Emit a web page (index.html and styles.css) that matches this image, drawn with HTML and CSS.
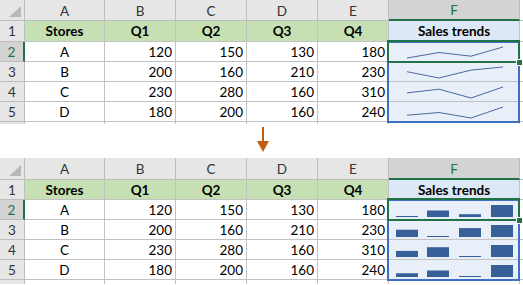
FILE: index.html
```html
<!DOCTYPE html>
<html>
<head>
<meta charset="utf-8">
<link rel="stylesheet" href="styles.css">
</head>
<body>
<div class="sheet sheet1">
  <div class="cell corner"><svg width="24" height="20" viewBox="0 0 24 20"><polygon points="21,6 21,17 9,17" fill="#b9b9b9"/></svg></div>
  <div class="cell colhead">A</div>
  <div class="cell colhead">B</div>
  <div class="cell colhead">C</div>
  <div class="cell colhead">D</div>
  <div class="cell colhead">E</div>
  <div class="cell colhead sel">F</div>
  <div class="cell colhead rest"></div>

  <div class="cell rowhead">1</div>
  <div class="cell h">Stores</div>
  <div class="cell h">Q1</div>
  <div class="cell h">Q2</div>
  <div class="cell h">Q3</div>
  <div class="cell h">Q4</div>
  <div class="cell h hf">Sales trends</div>
  <div class="cell rest"></div>

  <div class="cell rowhead selrow">2</div>
  <div class="cell c">A</div>
  <div class="cell n">120</div><div class="cell n">150</div><div class="cell n">130</div><div class="cell n">180</div>
  <div class="cell spark"><svg width="130" height="19" viewBox="0 0 130 19"><polyline points="18,16 50,10.5 82,14.2 114,5" /></svg></div>
  <div class="cell rest"></div>

  <div class="cell rowhead">3</div>
  <div class="cell c">B</div>
  <div class="cell n">200</div><div class="cell n">160</div><div class="cell n">210</div><div class="cell n">230</div>
  <div class="cell spark"><svg width="130" height="19" viewBox="0 0 130 19"><polyline points="18,9.7 50,16 82,8.1 114,5" /></svg></div>
  <div class="cell rest"></div>

  <div class="cell rowhead">4</div>
  <div class="cell c">C</div>
  <div class="cell n">230</div><div class="cell n">280</div><div class="cell n">160</div><div class="cell n">310</div>
  <div class="cell spark"><svg width="130" height="19" viewBox="0 0 130 19"><polyline points="18,10.9 50,7.2 82,16 114,5" /></svg></div>
  <div class="cell rest"></div>

  <div class="cell rowhead">5</div>
  <div class="cell c">D</div>
  <div class="cell n">180</div><div class="cell n">200</div><div class="cell n">160</div><div class="cell n">240</div>
  <div class="cell spark"><svg width="130" height="19" viewBox="0 0 130 19"><polyline points="18,13.25 50,10.5 82,16 114,5" /></svg></div>
  <div class="cell rest"></div>

  <div class="cell rowhead stub"></div>
  <div class="cell stub"></div><div class="cell stub"></div><div class="cell stub"></div><div class="cell stub"></div><div class="cell stub"></div><div class="cell stub"></div><div class="cell rest stub"></div>

  <div class="range"></div>
  <div class="active"><span class="handle"></span></div>
</div>

<div class="arrow">
  <svg width="12" height="26" viewBox="0 0 12 26"><rect x="5" y="0" width="2" height="16" fill="#c55a11"/><polygon points="0,14 12,14 6,25" fill="#c55a11"/></svg>
</div>

<div class="sheet sheet2">
  <div class="cell corner"><svg width="24" height="20" viewBox="0 0 24 20"><polygon points="21,6 21,17 9,17" fill="#b9b9b9"/></svg></div>
  <div class="cell colhead">A</div>
  <div class="cell colhead">B</div>
  <div class="cell colhead">C</div>
  <div class="cell colhead">D</div>
  <div class="cell colhead">E</div>
  <div class="cell colhead sel">F</div>
  <div class="cell colhead rest"></div>

  <div class="cell rowhead">1</div>
  <div class="cell h">Stores</div>
  <div class="cell h">Q1</div>
  <div class="cell h">Q2</div>
  <div class="cell h">Q3</div>
  <div class="cell h">Q4</div>
  <div class="cell h hf">Sales trends</div>
  <div class="cell rest"></div>

  <div class="cell rowhead selrow">2</div>
  <div class="cell c">A</div>
  <div class="cell n">120</div><div class="cell n">150</div><div class="cell n">130</div><div class="cell n">180</div>
  <div class="cell spark"><svg width="130" height="19" viewBox="0 0 130 19"><rect x="7" y="16" width="22" height="1"/><rect x="38" y="10.5" width="22" height="6.5"/><rect x="70" y="14.2" width="22" height="2.8"/><rect x="102" y="5" width="22" height="12"/></svg></div>
  <div class="cell rest"></div>

  <div class="cell rowhead">3</div>
  <div class="cell c">B</div>
  <div class="cell n">200</div><div class="cell n">160</div><div class="cell n">210</div><div class="cell n">230</div>
  <div class="cell spark"><svg width="130" height="19" viewBox="0 0 130 19"><rect x="7" y="9.7" width="22" height="7.3"/><rect x="38" y="16" width="22" height="1"/><rect x="70" y="8.1" width="22" height="8.9"/><rect x="102" y="5" width="22" height="12"/></svg></div>
  <div class="cell rest"></div>

  <div class="cell rowhead">4</div>
  <div class="cell c">C</div>
  <div class="cell n">230</div><div class="cell n">280</div><div class="cell n">160</div><div class="cell n">310</div>
  <div class="cell spark"><svg width="130" height="19" viewBox="0 0 130 19"><rect x="7" y="10.9" width="22" height="6.1"/><rect x="38" y="7.2" width="22" height="9.8"/><rect x="70" y="16" width="22" height="1"/><rect x="102" y="5" width="22" height="12"/></svg></div>
  <div class="cell rest"></div>

  <div class="cell rowhead">5</div>
  <div class="cell c">D</div>
  <div class="cell n">180</div><div class="cell n">200</div><div class="cell n">160</div><div class="cell n">240</div>
  <div class="cell spark"><svg width="130" height="19" viewBox="0 0 130 19"><rect x="7" y="13.25" width="22" height="3.75"/><rect x="38" y="10.5" width="22" height="6.5"/><rect x="70" y="16" width="22" height="1"/><rect x="102" y="5" width="22" height="12"/></svg></div>
  <div class="cell rest"></div>

  <div class="cell rowhead stub"></div>
  <div class="cell stub"></div><div class="cell stub"></div><div class="cell stub"></div><div class="cell stub"></div><div class="cell stub"></div><div class="cell stub"></div><div class="cell rest stub"></div>

  <div class="range"></div>
  <div class="active"><span class="handle"></span></div>
</div>
</body>
</html>
```

FILE: styles.css
```css
* { box-sizing: border-box; }

body {
  margin: 0;
  width: 523px;
  height: 285px;
  overflow: hidden;
  background: #ffffff;
  font-family: Lato, "Open Sans", "Liberation Sans", sans-serif;
  color: #000;
}

.sheet {
  display: grid;
  position: relative;
  grid-template-columns: 25px 80px 71px 71px 71px 71px 131px 1fr;
}

.sheet1 { grid-template-rows: 21px 21px 20px 20px 20px 20px 2px; }
.sheet2 { grid-template-rows: 22px 20px 20px 20px 20px 20px 4px; }

.cell {
  display: flex;
  align-items: center;
  border-right: 1px solid #c2c2c2;
  border-bottom: 1px solid #c2c2c2;
  font-size: 13.5px;
  white-space: nowrap;
  overflow: hidden;
  background: #fff;
}

.corner {
  background: #e6e6e6;
  border-color: #bdbdbd;
  padding: 0;
}
.corner svg { display: block; }

.colhead {
  background: #e6e6e6;
  border-color: #bdbdbd;
  justify-content: center;
  color: #333;
  padding-top: 1px;
}
.colhead.sel {
  background: #d3d3d3;
  color: #217346;
  border-bottom: 2px solid #217346;
}

.rowhead {
  background: #e6e6e6;
  border-color: #bdbdbd;
  justify-content: center;
  color: #333;
}
.rowhead.selrow {
  background: #d3d3d3;
  color: #217346;
  border-right: 2px solid #217346;
}
.rowhead.stub { border-bottom: none; }

.rest {
  border-right: none;
  background: #fff;
}
.colhead.rest { background: #fff; border-bottom: 1px solid #bdbdbd; }

.h {
  background: #c6e0b4;
  font-weight: bold;
  justify-content: center;
}
.h.hf { background: #dce8f5; }

.c { justify-content: center; }
.n { justify-content: flex-end; padding-right: 3px; }

.spark {
  background: #e9eff8;
  padding: 0;
  align-items: flex-start;
}
.spark svg { display: block; }
.spark polyline { fill: none; stroke: #4a69a0; stroke-width: 1; }
.spark rect { fill: #375f98; }

.stub { border-bottom: none; }

.range {
  position: absolute;
  grid-column: 7 / 8;
  grid-row: 3 / 7;
  top: -1px;
  bottom: -1px;
  left: -2px;
  right: 0;
  border: 2px solid #3d6fc4;
  z-index: 2;
}

.active {
  position: absolute;
  grid-column: 7 / 8;
  grid-row: 3 / 4;
  top: -2px;
  bottom: -1px;
  left: -2px;
  right: 0;
  border: 2px solid #217346;
  z-index: 3;
}
.handle {
  position: absolute;
  right: -5px;
  bottom: -5px;
  width: 7px;
  height: 7px;
  background: #217346;
  border: 1px solid #fff;
}

.arrow {
  height: 34px;
  padding: 3px 0 0 257px;
}
.arrow svg { display: block; }
```
